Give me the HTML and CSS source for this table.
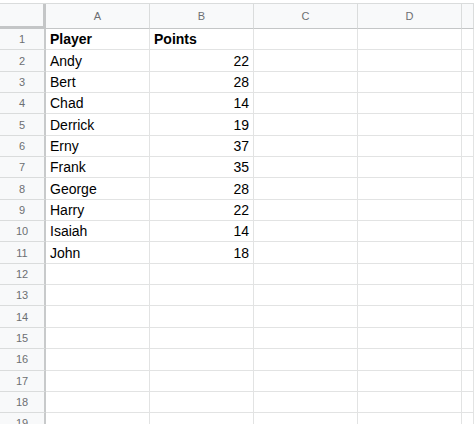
FILE: index.html
```html
<!DOCTYPE html>
<html>
<head>
<meta charset="utf-8">
<link rel="stylesheet" href="styles.css">
</head>
<body>
<div class="sheet">
  <div class="corner"></div>
  <div class="colhead">A</div>
  <div class="colhead">B</div>
  <div class="colhead">C</div>
  <div class="colhead">D</div>
  <div class="colhead"></div>

  <div class="rowhead">1</div><div class="cell bold">Player</div><div class="cell bold">Points</div><div class="cell"></div><div class="cell"></div><div class="cell"></div>
  <div class="rowhead">2</div><div class="cell">Andy</div><div class="cell num">22</div><div class="cell"></div><div class="cell"></div><div class="cell"></div>
  <div class="rowhead">3</div><div class="cell">Bert</div><div class="cell num">28</div><div class="cell"></div><div class="cell"></div><div class="cell"></div>
  <div class="rowhead">4</div><div class="cell">Chad</div><div class="cell num">14</div><div class="cell"></div><div class="cell"></div><div class="cell"></div>
  <div class="rowhead">5</div><div class="cell">Derrick</div><div class="cell num">19</div><div class="cell"></div><div class="cell"></div><div class="cell"></div>
  <div class="rowhead">6</div><div class="cell">Erny</div><div class="cell num">37</div><div class="cell"></div><div class="cell"></div><div class="cell"></div>
  <div class="rowhead">7</div><div class="cell">Frank</div><div class="cell num">35</div><div class="cell"></div><div class="cell"></div><div class="cell"></div>
  <div class="rowhead">8</div><div class="cell">George</div><div class="cell num">28</div><div class="cell"></div><div class="cell"></div><div class="cell"></div>
  <div class="rowhead">9</div><div class="cell">Harry</div><div class="cell num">22</div><div class="cell"></div><div class="cell"></div><div class="cell"></div>
  <div class="rowhead">10</div><div class="cell">Isaiah</div><div class="cell num">14</div><div class="cell"></div><div class="cell"></div><div class="cell"></div>
  <div class="rowhead">11</div><div class="cell">John</div><div class="cell num">18</div><div class="cell"></div><div class="cell"></div><div class="cell"></div>
  <div class="rowhead">12</div><div class="cell"></div><div class="cell"></div><div class="cell"></div><div class="cell"></div><div class="cell"></div>
  <div class="rowhead">13</div><div class="cell"></div><div class="cell"></div><div class="cell"></div><div class="cell"></div><div class="cell"></div>
  <div class="rowhead">14</div><div class="cell"></div><div class="cell"></div><div class="cell"></div><div class="cell"></div><div class="cell"></div>
  <div class="rowhead">15</div><div class="cell"></div><div class="cell"></div><div class="cell"></div><div class="cell"></div><div class="cell"></div>
  <div class="rowhead">16</div><div class="cell"></div><div class="cell"></div><div class="cell"></div><div class="cell"></div><div class="cell"></div>
  <div class="rowhead">17</div><div class="cell"></div><div class="cell"></div><div class="cell"></div><div class="cell"></div><div class="cell"></div>
  <div class="rowhead">18</div><div class="cell"></div><div class="cell"></div><div class="cell"></div><div class="cell"></div><div class="cell"></div>
  <div class="rowhead">19</div><div class="cell"></div><div class="cell"></div><div class="cell"></div><div class="cell"></div><div class="cell"></div>
</div>
</body>
</html>
```

FILE: styles.css
```css
html, body {
  margin: 0;
  padding: 0;
  background: #ffffff;
  overflow: hidden;
}

.sheet {
  margin-top: 3px;
  border-top: 1px solid #dadcdc;
  display: grid;
  grid-template-columns: 46px 104px 104px 104px 104px 12px;
  grid-template-rows: 25px repeat(19, 21.35px);
  font-family: "Liberation Sans", Arial, sans-serif;
}

.corner {
  background: #f8f9fa;
  border-right: 3px solid #c4c6c7;
  border-bottom: 3px solid #c4c6c7;
  box-sizing: border-box;
}

.colhead {
  background: #f8f9fa;
  border-right: 1px solid #dadcdc;
  border-bottom: 1px solid #c4c6c7;
  box-sizing: border-box;
  color: #6c6f72;
  font-size: 11px;
  display: flex;
  align-items: center;
  justify-content: center;
}

.rowhead {
  background: #f8f9fa;
  border-right: 2px solid #c8cacb;
  border-bottom: 1px solid #dadcdc;
  box-sizing: border-box;
  color: #6c6f72;
  font-size: 11px;
  display: flex;
  align-items: center;
  justify-content: center;
}

.cell {
  border-right: 1px solid #e2e3e3;
  border-bottom: 1px solid #e2e3e3;
  box-sizing: border-box;
  color: #000;
  font-size: 14px;
  display: flex;
  align-items: center;
  padding: 0 4px;
  white-space: nowrap;
  overflow: hidden;
}

.bold {
  font-weight: bold;
}

.num {
  justify-content: flex-end;
}
```
